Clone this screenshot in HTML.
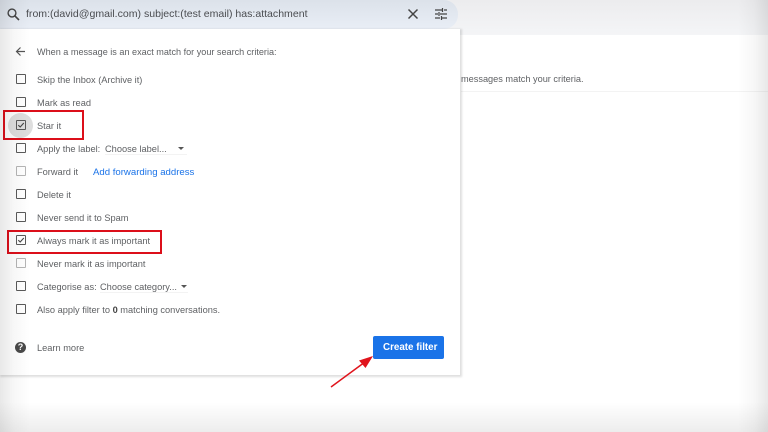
<!DOCTYPE html>
<html>
<head>
<meta charset="utf-8">
<style>
html,body{margin:0;padding:0}
body{width:768px;height:432px;overflow:hidden;background:#fff;position:relative;font-family:"Liberation Sans",sans-serif;color:#5a5c5f}
.abs{position:absolute}
#wrap{position:absolute;left:0;top:0;width:768px;height:432px;filter:blur(.3px)}
.t{position:absolute;font-size:9.25px;line-height:12px;white-space:nowrap;color:#5f6164;left:37px}
.cb{position:absolute;left:16px;width:8px;height:8px;border:1.3px solid #5a5a5a;border-radius:1px;background:transparent}
.cb.l{border-color:#b5b5b5}
.cb svg{position:absolute;left:-1px;top:-1px}
.red{position:absolute;border:2px solid #dc0f1a;box-sizing:border-box}
.drop{position:absolute;width:0;height:0;border-left:3px solid transparent;border-right:3px solid transparent;border-top:3px solid #555}
.line{position:absolute;height:1px;background:#f3f3f3}
</style>
</head>
<body>
<div id="wrap">
<div class="abs" style="left:0;top:0;width:768px;height:35px;background:linear-gradient(#ececee,#f4f5f7)"></div>
<div class="abs" style="left:0;top:0;width:458px;height:29px;background:linear-gradient(#dce2ea,#e9eef6);border-radius:0 14px 14px 0"></div>
<svg class="abs" style="left:6px;top:7px" width="15" height="15" viewBox="0 0 15 15"><circle cx="6" cy="6" r="3.9" fill="none" stroke="#444" stroke-width="1.4"/><path d="M8.9 8.9L13 13" stroke="#444" stroke-width="1.6"/></svg>
<div class="abs" style="left:26px;top:7px;font-size:10.55px;line-height:15px;color:#4a4c50;white-space:nowrap">from:(david@gmail.com) subject:(test email) has:attachment</div>
<svg class="abs" style="left:406px;top:7px" width="14" height="14" viewBox="0 0 14 14"><path d="M2.5 2.5L11.5 11.5M11.5 2.5L2.5 11.5" stroke="#444" stroke-width="1.5"/></svg>
<svg class="abs" style="left:434px;top:7px" width="14" height="14" viewBox="0 0 14 14"><path d="M1 3h7M10 3h3M1 7h3M6 7h7M1 11h5M8 11h5M8.5 1v4M5 5v4M7.5 9v4" stroke="#444" stroke-width="1.2" fill="none"/></svg>

<div class="abs" style="left:461px;top:73px;font-size:9.2px;line-height:12px;color:#5f6164;white-space:nowrap">messages match your criteria.</div>
<div class="line" style="left:461px;top:91px;width:307px"></div>

<div class="abs" style="left:0;top:29px;width:460px;height:346px;background:#fff;box-shadow:1px 1px 2px 1px rgba(0,0,0,.13)"></div>

<svg class="abs" style="left:14px;top:45px" width="13" height="13" viewBox="0 0 13 13"><path d="M11 6.5H3M6.5 2.5L2.5 6.5L6.5 10.5" fill="none" stroke="#555" stroke-width="1.2"/></svg>
<div class="t" style="top:46px;font-size:9.1px">When a message is an exact match for your search criteria:</div>

<div class="abs" style="left:8px;top:113px;width:25px;height:25px;border-radius:50%;background:#dedede"></div>

<div class="cb" style="top:74px"></div><div class="t" style="top:73.5px">Skip the Inbox (Archive it)</div>
<div class="cb" style="top:97px"></div><div class="t" style="top:96.5px">Mark as read</div>
<div class="cb" style="top:120px"><svg width="10" height="10" viewBox="0 0 10 10"><path d="M2.3 5.2L4.2 7L7.8 3" fill="none" stroke="#444" stroke-width="1.1"/></svg></div><div class="t" style="top:119.5px">Star it</div>
<div class="cb" style="top:143px"></div><div class="t" style="top:142.5px">Apply the label:</div>
<div class="t" style="top:142.5px;left:105px">Choose label...</div><div class="drop" style="left:178px;top:147px"></div>
<div class="line" style="left:105px;top:154px;width:82px"></div>
<div class="cb l" style="top:166px"></div><div class="t" style="top:165.5px">Forward it</div>
<div class="t" style="top:167px;left:93px;color:#1a73e8;font-size:9.6px">Add forwarding address</div>
<div class="cb" style="top:189px"></div><div class="t" style="top:188.5px">Delete it</div>
<div class="cb" style="top:212px"></div><div class="t" style="top:211.5px">Never send it to Spam</div>
<div class="cb" style="top:235px"><svg width="10" height="10" viewBox="0 0 10 10"><path d="M2.3 5.2L4.2 7L7.8 3" fill="none" stroke="#444" stroke-width="1.1"/></svg></div><div class="t" style="top:234.5px">Always mark it as important</div>
<div class="cb l" style="top:258px"></div><div class="t" style="top:257.5px">Never mark it as important</div>
<div class="cb" style="top:281px"></div><div class="t" style="top:280.5px">Categorise as:</div>
<div class="t" style="top:280.5px;left:100px">Choose category...</div><div class="drop" style="left:181px;top:285px"></div>
<div class="line" style="left:100px;top:292px;width:88px"></div>
<div class="cb" style="top:304px"></div><div class="t" style="top:303.5px">Also apply filter to <b style="color:#444">0</b> matching conversations.</div>

<div class="abs" style="left:15px;top:342px;width:11px;height:11px;border-radius:50%;background:#4a4a4a;color:#fff;font-size:9px;line-height:11px;font-weight:bold;text-align:center">?</div>
<div class="t" style="top:341.5px">Learn more</div>

<div class="abs" style="left:373px;top:336px;width:71px;height:23px;background:#1a73e8;border-radius:2px"></div>
<div class="abs" style="left:383px;top:342px;color:#fff;font-size:9.8px;font-weight:bold;line-height:12px;white-space:nowrap">Create filter</div>

<div class="red" style="left:3px;top:110px;width:81px;height:30px"></div>
<div class="red" style="left:7px;top:230px;width:155px;height:24px"></div>

<svg class="abs" style="left:325px;top:350px" width="55" height="42" viewBox="0 0 55 42"><path d="M6 37L40 12" stroke="#e0141c" stroke-width="1.5"/><path d="M48 6L34 10.5L40.5 18Z" fill="#e0141c"/></svg>

<div class="abs" style="left:0;top:0;width:768px;height:432px;background:linear-gradient(90deg,rgba(0,0,0,.09),rgba(0,0,0,.03) 14px,rgba(0,0,0,0) 30px,rgba(0,0,0,0) 738px,rgba(0,0,0,.03) 754px,rgba(0,0,0,.09))"></div>
<div class="abs" style="left:0;top:402px;width:768px;height:30px;background:linear-gradient(rgba(0,0,0,0),rgba(0,0,0,.07))"></div>
</div>
</body>
</html>
